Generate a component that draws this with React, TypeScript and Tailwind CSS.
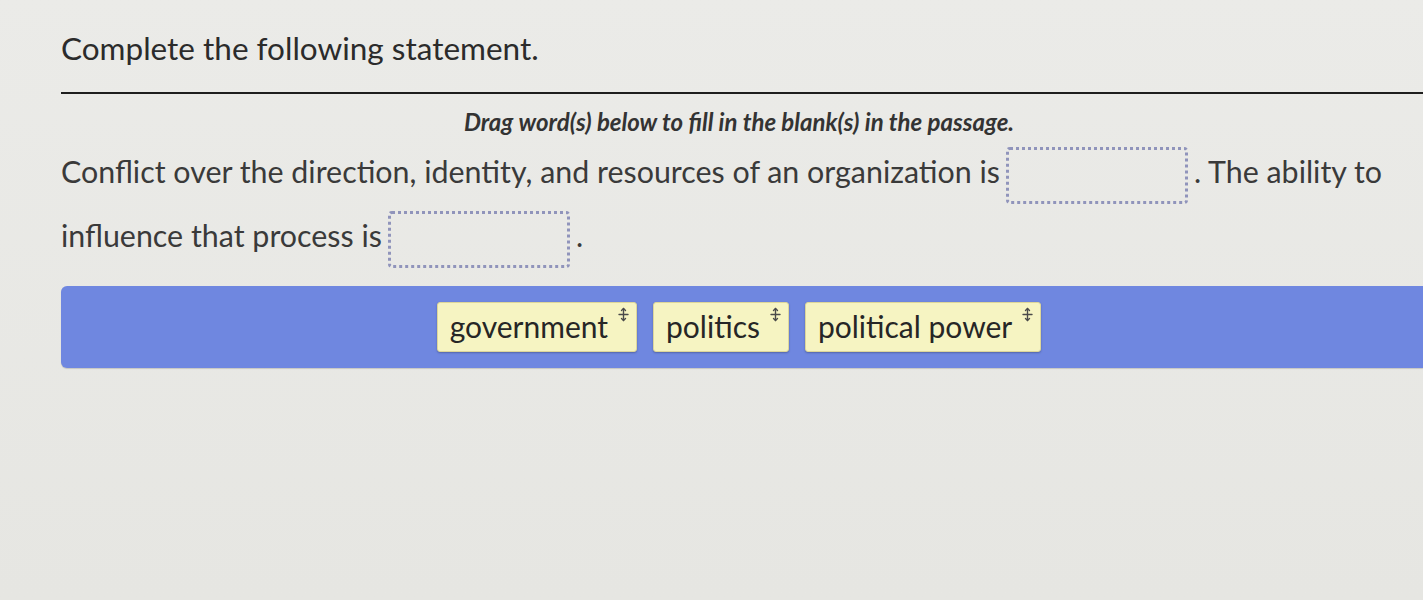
import React from "react";

function MoveIcon() {
  return (
    <svg width="13" height="15" viewBox="0 0 13 15" className="absolute right-[6px] top-[4px]" fill="none" stroke="#4a4a4a" strokeWidth="1.4" strokeLinecap="round" strokeLinejoin="round">
      <path d="M6.5 1.5 L6.5 13.5" />
      <path d="M2 7.5 L11 7.5" />
      <path d="M4.5 3.5 L6.5 1.5 L8.5 3.5" />
      <path d="M4.5 11.5 L6.5 13.5 L8.5 11.5" />
    </svg>
  );
}

function Chip({ label }: { label: string }) {
  return (
    <div className="relative h-[50px] flex items-center pl-[12px] pr-[28px] bg-[#f6f4c2] border border-[#ddd69a] rounded-[3px] shadow-[0_1px_2px_rgba(0,0,0,0.25)] text-[30px] text-[#262626]">
      {label}
      <MoveIcon />
    </div>
  );
}

function Blank() {
  return (
    <span className="inline-block align-middle w-[182px] h-[57px] mx-[6px] border-[3px] border-dotted border-[#9094bb] rounded-[4px]" />
  );
}

export default function App() {
  return (
    <div
      className="w-[1423px] h-[600px] overflow-hidden bg-gradient-to-b from-[#ebebe8] to-[#e6e6e2] text-[#333]"
      style={{ fontFamily: "Lato, 'Noto Sans', sans-serif" }}
    >
      <div className="pl-[61px] pt-[26px]">
        <h1 className="text-[31.5px] leading-[44px] text-[#2b2b2b] pr-4">Complete the following statement.</h1>
        <div className="mt-[22px] h-[2px] bg-[#1e1e1e]" />
        <div className="pr-[6px]">
          <p className="mt-[12px] text-center text-[24px] font-bold italic leading-[31px] text-[#333]">
            Drag word(s) below to fill in the blank(s) in the passage.
          </p>
          <div className="mt-[3px] text-[30.4px] leading-[62px] text-[#3a3a3a] pr-[20px]">
            Conflict over the direction, identity, and resources of an organization is
            <Blank />. The ability to influence that process is
            <Blank />.
          </div>
        </div>
        <div className="mt-[18px] h-[82px] bg-[#6f87e0] rounded-l-[6px] flex items-center justify-center gap-[16px] pr-[6px] shadow-[0_1px_1px_rgba(0,0,0,0.15)]">
          <Chip label="government" />
          <Chip label="politics" />
          <Chip label="political power" />
        </div>
      </div>
    </div>
  );
}
